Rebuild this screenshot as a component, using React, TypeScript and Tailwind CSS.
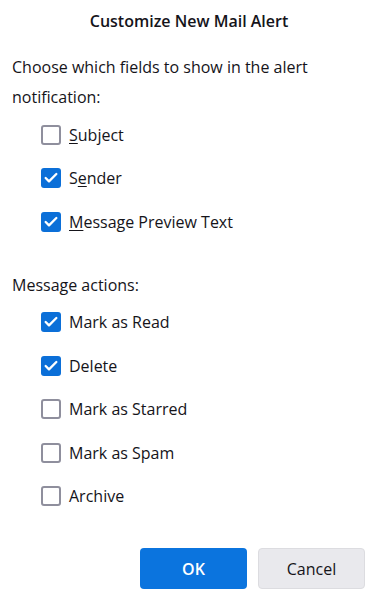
import { Check } from 'lucide-react';

type Field = { label: string; key?: number; checked: boolean };

const fields: Field[] = [
  { label: 'Subject', key: 0, checked: false },
  { label: 'Sender', key: 1, checked: true },
  { label: 'Message Preview Text', key: 0, checked: true },
];

const actions: Field[] = [
  { label: 'Mark as Read', checked: true },
  { label: 'Delete', checked: true },
  { label: 'Mark as Starred', checked: false },
  { label: 'Mark as Spam', checked: false },
  { label: 'Archive', checked: false },
];

function Label({ text, accessKey }: { text: string; accessKey?: number }) {
  if (accessKey === undefined) return <span>{text}</span>;
  return (
    <span>
      {text.slice(0, accessKey)}
      <span className="underline underline-offset-2">{text[accessKey]}</span>
      {text.slice(accessKey + 1)}
    </span>
  );
}

function Row({ item }: { item: Field }) {
  return (
    <div className="flex items-center gap-2 h-[43.5px]">
      {item.checked ? (
        <div className="w-5 h-5 rounded-[3px] bg-[#0b6fd8] flex items-center justify-center">
          <Check className="w-4 h-4 text-white" strokeWidth={3.5} />
        </div>
      ) : (
        <div className="w-5 h-5 rounded-[3px] border-2 border-[#8f8f9d] bg-white" />
      )}
      <Label text={item.label} accessKey={item.key} />
    </div>
  );
}

export default function App() {
  return (
    <div
      className="w-[378px] h-[598px] bg-white text-[#15141a] text-[16px] flex flex-col"
      style={{ fontFamily: '"Open Sans", "Noto Sans", sans-serif' }}
    >
      <h1 className="text-center font-semibold text-[16px] pt-[9px] h-[42px]">Customize New Mail Alert</h1>
      <p className="px-3 leading-[30px] mt-[10px]">Choose which fields to show in the alert notification:</p>
      <div className="pl-[41px] mt-[1px]">
        {fields.map((f) => (
          <Row key={f.label} item={f} />
        ))}
      </div>
      <p className="px-3 mt-[26px] leading-[30px]">Message actions:</p>
      <div className="pl-[41px] mt-[1px]">
        {actions.map((f) => (
          <Row key={f.label} item={f} />
        ))}
      </div>
      <div className="flex justify-end gap-[11px] pr-[13px] mt-auto mb-[9px]">
        <button className="w-[107px] h-[41px] rounded-[4px] bg-[#0b74de] text-white font-semibold">OK</button>
        <button className="w-[107px] h-[41px] rounded-[4px] bg-[#e9e9ed] border border-[#dcdce0]">Cancel</button>
      </div>
    </div>
  );
}
